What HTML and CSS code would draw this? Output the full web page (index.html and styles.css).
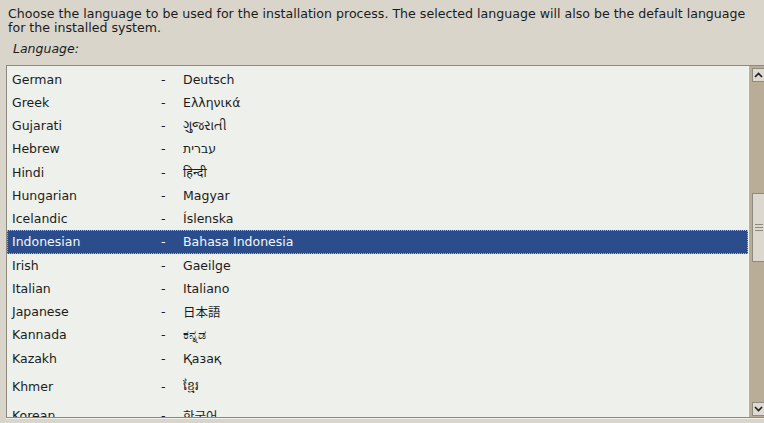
FILE: index.html
```html
<!DOCTYPE html>
<html>
<head>
<meta charset="utf-8">
<link rel="stylesheet" href="styles.css">
</head>
<body>
<div class="page">
  <p class="intro">Choose the language to be used for the installation process. The selected language will also be the default language for the installed system.</p>
  <div class="label">Language:</div>
  <div class="frame">
    <div class="list">
      <div class="row"><span class="name">German</span><span class="dash">-</span><span class="native">Deutsch</span></div>
      <div class="row"><span class="name">Greek</span><span class="dash">-</span><span class="native">Ελληνικά</span></div>
      <div class="row"><span class="name">Gujarati</span><span class="dash">-</span><span class="native">ગુજરાતી</span></div>
      <div class="row"><span class="name">Hebrew</span><span class="dash">-</span><span class="native">עברית</span></div>
      <div class="row"><span class="name">Hindi</span><span class="dash">-</span><span class="native">हिन्दी</span></div>
      <div class="row"><span class="name">Hungarian</span><span class="dash">-</span><span class="native">Magyar</span></div>
      <div class="row"><span class="name">Icelandic</span><span class="dash">-</span><span class="native">Íslenska</span></div>
      <div class="row selected"><span class="name">Indonesian</span><span class="dash">-</span><span class="native">Bahasa Indonesia</span></div>
      <div class="row"><span class="name">Irish</span><span class="dash">-</span><span class="native">Gaeilge</span></div>
      <div class="row"><span class="name">Italian</span><span class="dash">-</span><span class="native">Italiano</span></div>
      <div class="row"><span class="name">Japanese</span><span class="dash">-</span><span class="native cjk">日本語</span></div>
      <div class="row"><span class="name">Kannada</span><span class="dash">-</span><span class="native">ಕನ್ನಡ</span></div>
      <div class="row"><span class="name">Kazakh</span><span class="dash">-</span><span class="native">Қазақ</span></div>
      <div class="row tall"><span class="name">Khmer</span><span class="dash">-</span><span class="native">ខ្មែរ</span></div>
      <div class="row"><span class="name">Korean</span><span class="dash">-</span><span class="native kr">한국어</span></div>
    </div>
    <div class="scrollbar">
      <div class="btn up"><svg width="9" height="6" viewBox="0 0 9 6"><path d="M1 5 L4.5 1.5 L8 5" fill="none" stroke="#1c1c1c" stroke-width="1.6"/></svg></div>
      <div class="trough">
        <div class="thumb"><span class="grip"></span><span class="grip"></span><span class="grip"></span></div>
      </div>
      <div class="btn down"><svg width="9" height="6" viewBox="0 0 9 6"><path d="M1 1 L4.5 4.5 L8 1" fill="none" stroke="#1c1c1c" stroke-width="1.6"/></svg></div>
    </div>
  </div>
</div>
</body>
</html>
```

FILE: styles.css
```css
html, body {
  margin: 0;
  padding: 0;
  width: 764px;
  height: 423px;
  overflow: hidden;
  background: #d9d5cb;
}

.page {
  font-family: "DejaVu Sans", "Noto Sans", sans-serif;
  font-size: 12.5px;
  color: #1c1c1c;
  padding-top: 7px;
}

.intro {
  margin: 0;
  padding: 0 10px 0 8px;
  font-size: 12.6px;
  line-height: 14px;
}

.label {
  font-style: italic;
  margin: 7px 0 0 13px;
  line-height: 14px;
}

.frame {
  margin: 9px 0 0 6px;
  height: 351px;
  display: flex;
  border-top: 1px solid #8e897e;
  border-left: 1px solid #8e897e;
  border-bottom: 1px solid #8e897e;
  box-shadow: 0 1px 0 #f2f0ea;
  background: #b9ad97;
}

.list {
  width: 741px;
  background: #edf0eb;
  border-right: 1px solid #f6f6f2;
  padding-top: 1.5px;
  overflow: hidden;
}

.row {
  height: 23.25px;
  display: flex;
  align-items: center;
  white-space: nowrap;
  box-sizing: border-box;
}

.row.tall {
  height: 34px;
}

.name {
  width: 149px;
  padding-left: 5px;
  flex: none;
}

.dash {
  width: 22px;
  flex: none;
}

.native {
  font-family: "DejaVu Sans", "Noto Sans", "Noto Sans CJK JP", sans-serif;
}

.native.cjk {
  font-family: "Noto Sans CJK JP", "DejaVu Sans", sans-serif;
}

.native.kr {
  font-family: "Noto Sans CJK KR", "DejaVu Sans", sans-serif;
}

.row.selected {
  background: #2b4d8b;
  color: #f4f6fa;
  outline: 1px dotted #9fb3d8;
  outline-offset: -1px;
}

.scrollbar {
  flex: 1;
  display: flex;
  flex-direction: column;
  padding: 2px 0 0 3px;
}

.btn {
  height: 12px;
  background: #dedad1;
  border: 1px solid #8f8a7e;
  border-right: none;
  display: flex;
  align-items: center;
  justify-content: center;
  flex: none;
}

.trough {
  flex: 1;
  position: relative;
}

.thumb {
  position: absolute;
  top: 111px;
  left: 0;
  right: 0;
  height: 69px;
  box-sizing: border-box;
  background: #dcd8cf;
  border: 1px solid #8f8a7e;
  border-right: none;
  display: flex;
  flex-direction: column;
  align-items: center;
  justify-content: center;
  gap: 2px;
}

.grip {
  width: 8px;
  height: 1px;
  background: #8f8a7e;
}

.btn.down {
  margin-bottom: 1px;
}
```
